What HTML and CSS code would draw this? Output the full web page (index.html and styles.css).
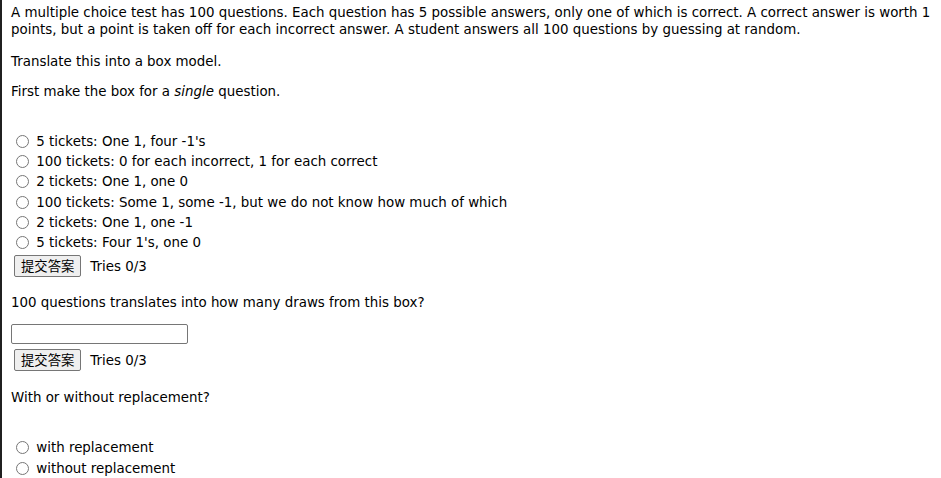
FILE: index.html
```html
<!DOCTYPE html>
<html lang="en">
<head>
    <meta charset="UTF-8">
    <title>Box model quiz</title>
    <link rel="stylesheet" href="styles.css">
</head>
<body>
    <div class="problem">
        <p class="intro">A multiple choice test has 100 questions. Each question has 5 possible answers, only one of which is correct. A correct answer is worth 1 points, but a point is taken off for each incorrect answer. A student answers all 100 questions by guessing at random.</p>
        <p>Translate this into a box model.</p>
        <p>First make the box for a <em>single</em> question.</p>

        <div class="choices">
            <label class="choice"><input type="radio" name="box"> 5 tickets: One 1, four -1's</label>
            <label class="choice"><input type="radio" name="box"> 100 tickets: 0 for each incorrect, 1 for each correct</label>
            <label class="choice"><input type="radio" name="box"> 2 tickets: One 1, one 0</label>
            <label class="choice"><input type="radio" name="box"> 100 tickets: Some 1, some -1, but we do not know how much of which</label>
            <label class="choice"><input type="radio" name="box"> 2 tickets: One 1, one -1</label>
            <label class="choice"><input type="radio" name="box"> 5 tickets: Four 1's, one 0</label>
        </div>
        <div class="submit-row">
            <button type="button" class="submit">提交答案</button>
            <span class="tries">Tries 0/3</span>
        </div>

        <p class="question">100 questions translates into how many draws from this box?</p>
        <input type="text" class="answer">
        <div class="submit-row after-input">
            <button type="button" class="submit">提交答案</button>
            <span class="tries">Tries 0/3</span>
        </div>

        <p class="question">With or without replacement?</p>
        <div class="choices last">
            <label class="choice"><input type="radio" name="repl"> with replacement</label>
            <label class="choice"><input type="radio" name="repl"> without replacement</label>
        </div>
    </div>
</body>
</html>
```

FILE: styles.css
```css
* {
    box-sizing: border-box;
}
body {
    margin: 0;
    height: 100vh;
    border-left: 2px solid #202020;
    background-color: #fff;
    color: #000;
    font-family: 'DejaVu Sans', Verdana, sans-serif;
    font-size: 13.4px;
    line-height: 17px;
    overflow: hidden;
}
.problem {
    padding: 4px 0 0 9px;
}
p {
    margin: 0 0 13px 0;
}
.intro {
    margin-bottom: 15px;
}
.choices {
    margin-top: 32px;
}
.choices.last {
    margin-top: 32px;
}
.choice {
    display: block;
    height: 20.2px;
    line-height: 20px;
}
.choices.last .choice {
    height: 20.6px;
}
.choice input {
    margin: 3px 3px 0 5px;
    width: 13px;
    height: 13px;
    vertical-align: -2px;
}
.submit-row {
    display: flex;
    align-items: center;
    margin-top: 2px;
    margin-bottom: 17px;
}
.submit-row.after-input {
    margin-top: 5px;
    margin-bottom: 18px;
}
.submit {
    margin-left: 3px;
    height: 22px;
    padding: 1px 6px;
    border: 1px solid #767676;
    border-radius: 2px;
    background-color: #efefef;
    color: #000;
    font-family: 'Noto Sans CJK SC', sans-serif;
    font-size: 13.33px;
    line-height: 18px;
}
.tries {
    margin-left: 9px;
}
.question {
    margin-bottom: 13px;
}
.answer {
    display: block;
    width: 177px;
    height: 20px;
    margin: 0;
    border: 1px solid #767676;
    border-radius: 2px;
    font-size: 13.33px;
}
```
